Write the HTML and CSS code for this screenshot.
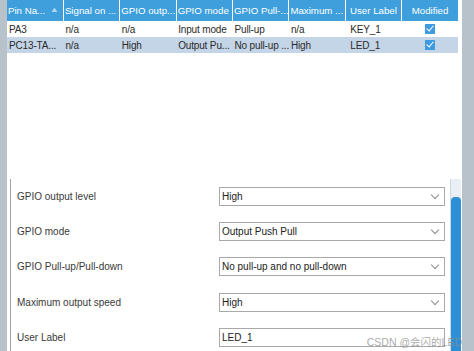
FILE: index.html
```html
<!DOCTYPE html>
<html lang="en">
<head>
    <meta charset="UTF-8">
    <meta name="viewport" content="width=device-width, initial-scale=1.0">
    <title>Pin Configuration</title>
    <link rel="stylesheet" href="styles.css">
</head>
<body>

    <div class="panel">

        <!-- Pin table -->
        <div class="table-area">
            <table class="pin-table">
                <thead>
                    <tr>
                        <th>Pin Na... <svg class="sort" width="7" height="6" viewBox="0 0 7 6"><path d="M3.5 0.5 L6.5 5 L0.5 5 Z" fill="#a9d3f1"/></svg></th>
                        <th>Signal on ...</th>
                        <th>GPIO outp...</th>
                        <th>GPIO mode</th>
                        <th>GPIO Pull-...</th>
                        <th>Maximum ...</th>
                        <th class="center">User Label</th>
                        <th class="center">Modified</th>
                    </tr>
                </thead>
                <tbody>
                    <tr>
                        <td>PA3</td>
                        <td>n/a</td>
                        <td>n/a</td>
                        <td>Input mode</td>
                        <td>Pull-up</td>
                        <td>n/a</td>
                        <td class="label-cell">KEY_1</td>
                        <td class="center"><span class="check"></span></td>
                    </tr>
                    <tr class="selected">
                        <td>PC13-TA...</td>
                        <td>n/a</td>
                        <td>High</td>
                        <td>Output Pu...</td>
                        <td>No pull-up ...</td>
                        <td>High</td>
                        <td class="label-cell">LED_1</td>
                        <td class="center"><span class="check"></span></td>
                    </tr>
                </tbody>
            </table>
        </div>

        <!-- Pin settings -->
        <div class="settings">
            <div class="settings-body">
                <div class="field">
                    <span class="field-label">GPIO output level</span>
                    <div class="dropdown">High<span class="chevron"></span></div>
                </div>
                <div class="field">
                    <span class="field-label">GPIO mode</span>
                    <div class="dropdown">Output Push Pull<span class="chevron"></span></div>
                </div>
                <div class="field">
                    <span class="field-label">GPIO Pull-up/Pull-down</span>
                    <div class="dropdown">No pull-up and no pull-down<span class="chevron"></span></div>
                </div>
                <div class="field">
                    <span class="field-label">Maximum output speed</span>
                    <div class="dropdown">High<span class="chevron"></span></div>
                </div>
                <div class="field">
                    <span class="field-label">User Label</span>
                    <div class="text-box">LED_1</div>
                </div>
            </div>
            <div class="scrollbar">
                <div class="thumb"></div>
            </div>
        </div>

    </div>

    <div class="watermark">CSDN @会闪的LED</div>

</body>
</html>
```

FILE: styles.css
```css
/* Global Styles */
body {
    margin: 0;
    height: 351px;
    overflow: hidden;
    background-color: #b7c2cb;
    font-family: 'Liberation Sans', Arial, sans-serif;
    font-size: 10px;
    color: #2b2b2b;
    display: flex;
    padding-left: 7px;
}

.panel {
    width: 455px;
    background-color: #ffffff;
    display: flex;
    flex-direction: column;
}

/* Pin table */
.table-area {
    height: 179px;
    flex-shrink: 0;
}

.pin-table {
    width: 451px;
    border-collapse: collapse;
    table-layout: fixed;
}

.pin-table th {
    background-color: #3e9fdc;
    color: #ffffff;
    font-weight: normal;
    font-size: 9.7px;
    text-align: left;
    height: 21px;
    padding: 0 0 0 1px;
    border-right: 1px solid #ffffff;
    white-space: nowrap;
    overflow: hidden;
}

.pin-table th:last-child {
    border-right: none;
}

.pin-table td {
    height: 16px;
    padding: 0 0 0 2px;
    letter-spacing: -0.15px;
    white-space: nowrap;
    overflow: hidden;
}

.pin-table .center {
    text-align: center;
    padding-left: 0;
}

.pin-table .label-cell {
    padding-left: 5px;
}

.pin-table tr.selected td {
    background-color: #c4d5e7;
}

.sort {
    margin-left: 3px;
    vertical-align: 1px;
}

.check {
    display: inline-block;
    width: 10px;
    height: 10px;
    background-color: #3f9be0;
    position: relative;
    vertical-align: -1px;
}

.check::after {
    content: "";
    position: absolute;
    left: 3px;
    top: 0px;
    width: 3px;
    height: 6px;
    border-right: 1.5px solid #ffffff;
    border-bottom: 1.5px solid #ffffff;
    transform: rotate(40deg);
}

/* Pin settings */
.settings {
    flex: 1;
    min-height: 0;
    overflow: hidden;
    display: flex;
    margin-left: 3px;
    border-left: 1px solid #a5a5a5;
}

.settings-body {
    flex: 1;
    padding-top: 0;
}

.field {
    height: 35.2px;
    display: flex;
    align-items: center;
    padding-left: 6px;
}

.field-label {
    width: 202px;
    color: #3a3a3a;
}

.dropdown,
.text-box {
    width: 222px;
    height: 17px;
    border: 1px solid #a9a9a9;
    padding-left: 2px;
    display: flex;
    align-items: center;
    justify-content: space-between;
    color: #222222;
}

.chevron {
    width: 5px;
    height: 5px;
    margin-right: 6px;
    margin-bottom: 3px;
    border-right: 1px solid #8c8c8c;
    border-bottom: 1px solid #8c8c8c;
    transform: rotate(45deg);
}

.scrollbar {
    width: 10px;
    margin-right: 1px;
    background-color: #e9eff5;
    border-left: 1px solid #d0d8e0;
    padding-top: 18px;
    display: flex;
    justify-content: center;
}

.thumb {
    width: 7px;
    flex: 1;
    background-color: #2d8fd6;
    border-radius: 4px 4px 0 0;
}

/* Watermark */
.watermark {
    position: absolute;
    right: 12px;
    bottom: 2px;
    font-size: 10.5px;
    color: rgba(140, 140, 140, 0.75);
    font-family: 'Liberation Sans', 'Noto Sans CJK SC', sans-serif;
}
```
